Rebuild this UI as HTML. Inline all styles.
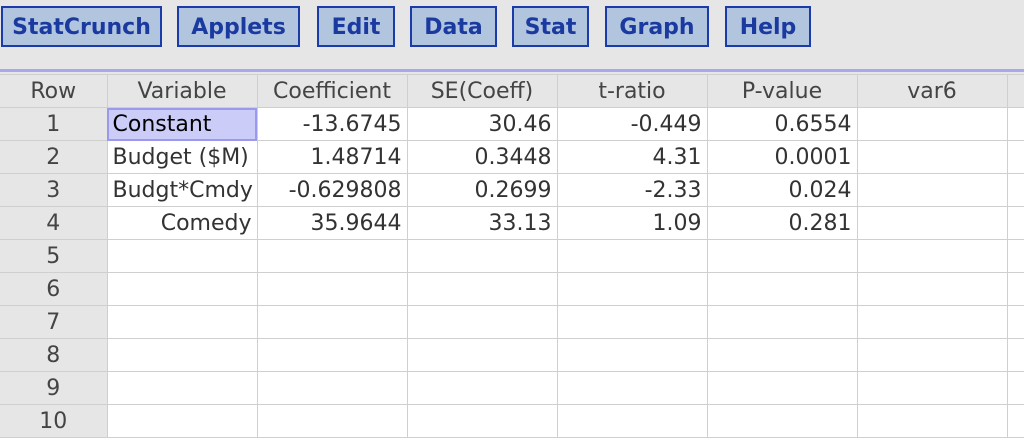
<!DOCTYPE html><html><head><style>
body{margin:0;width:1024px;height:426px;overflow:hidden;background:#e6e6e6;font-family:"DejaVu Sans","Liberation Sans",sans-serif;}
.btn{position:absolute;top:6px;height:37px;background:#b2c5df;border:2px solid #1b3ca8;color:#1b3aa0;font-weight:bold;font-size:22px;line-height:39px;text-align:center;}
.line{position:absolute;top:69px;left:0;width:1024px;height:3px;background:#a8a8f0;}
table{position:absolute;top:74px;left:0;border-collapse:collapse;table-layout:fixed;width:1047px;}
td{height:32px;border:1px solid #cfcfcf;padding:0 5px;font-size:22px;color:#333;background:#fff;white-space:nowrap;overflow:hidden;text-align:right;}
tr.h td{background:#e6e6e6;text-align:center;color:#444;}
td.r{background:#e6e6e6;text-align:center;color:#444;border-left:none;}
td.sel{background:#ccccf8;outline:2px solid #9999ee;outline-offset:-2px;text-align:left;color:#000;}
</style></head><body>
<div class="btn" style="left:1px;width:157px">StatCrunch</div>
<div class="btn" style="left:177px;width:119px">Applets</div>
<div class="btn" style="left:317px;width:74px">Edit</div>
<div class="btn" style="left:410px;width:83px">Data</div>
<div class="btn" style="left:512px;width:73px">Stat</div>
<div class="btn" style="left:605px;width:100px">Graph</div>
<div class="btn" style="left:725px;width:82px">Help</div>
<div class="line"></div>
<table>
<colgroup><col style="width:107px"><col style="width:150px"><col style="width:150px"><col style="width:150px"><col style="width:150px"><col style="width:150px"><col style="width:150px"><col style="width:40px"></colgroup>
<tr class="h"><td style="border-left:none">Row</td><td>Variable</td><td>Coefficient</td><td>SE(Coeff)</td><td>t-ratio</td><td>P-value</td><td>var6</td><td></td></tr>
<tr><td class="r">1</td><td class="sel">Constant</td><td>-13.6745</td><td>30.46</td><td>-0.449</td><td>0.6554</td><td></td><td></td></tr>
<tr><td class="r">2</td><td style="text-align:left">Budget ($M)</td><td>1.48714</td><td>0.3448</td><td>4.31</td><td>0.0001</td><td></td><td></td></tr>
<tr><td class="r">3</td><td style="text-align:left">Budgt*Cmdy</td><td>-0.629808</td><td>0.2699</td><td>-2.33</td><td>0.024</td><td></td><td></td></tr>
<tr><td class="r">4</td><td>Comedy</td><td>35.9644</td><td>33.13</td><td>1.09</td><td>0.281</td><td></td><td></td></tr>
<tr><td class="r">5</td><td></td><td></td><td></td><td></td><td></td><td></td><td></td></tr>
<tr><td class="r">6</td><td></td><td></td><td></td><td></td><td></td><td></td><td></td></tr>
<tr><td class="r">7</td><td></td><td></td><td></td><td></td><td></td><td></td><td></td></tr>
<tr><td class="r">8</td><td></td><td></td><td></td><td></td><td></td><td></td><td></td></tr>
<tr><td class="r">9</td><td></td><td></td><td></td><td></td><td></td><td></td><td></td></tr>
<tr><td class="r">10</td><td></td><td></td><td></td><td></td><td></td><td></td><td></td></tr>
</table>
</body></html>
